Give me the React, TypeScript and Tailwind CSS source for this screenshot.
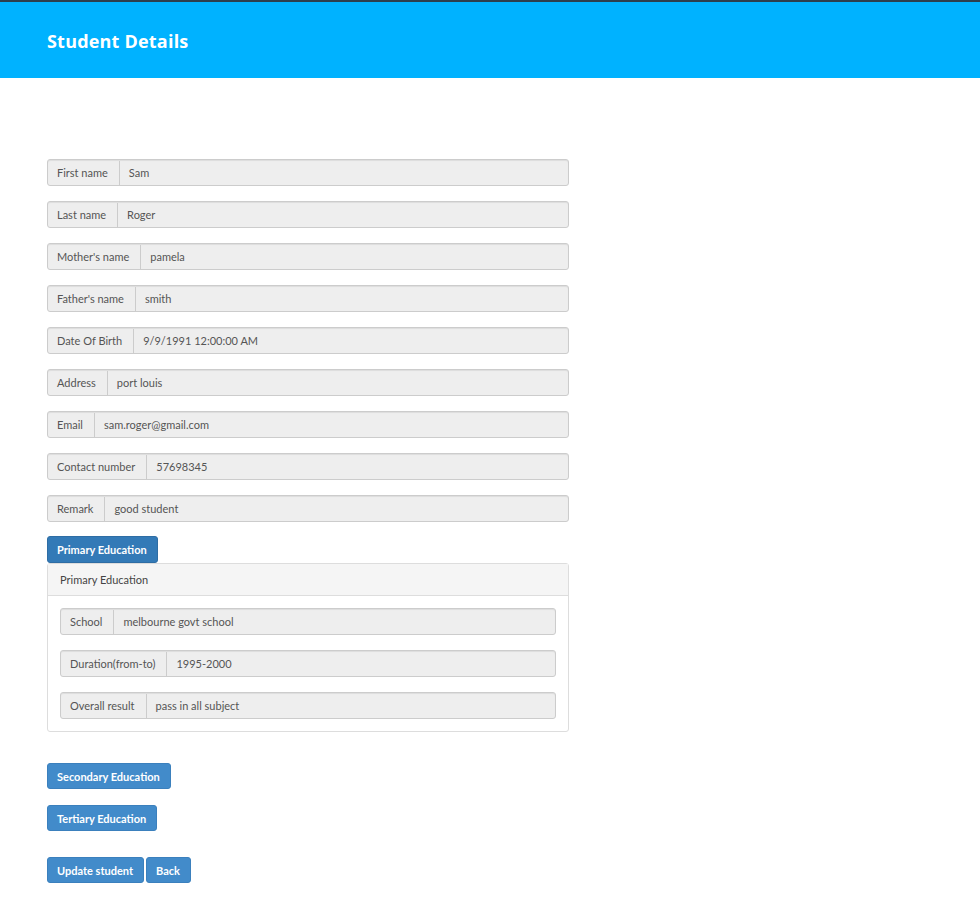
import React from "react";

const fields: [string, string][] = [
  ["First name", "Sam"],
  ["Last name", "Roger"],
  ["Mother's name", "pamela"],
  ["Father's name", "smith"],
  ["Date Of Birth", "9/9/1991 12:00:00 AM"],
  ["Address", "port louis"],
  ["Email", "sam.roger@gmail.com"],
  ["Contact number", "57698345"],
  ["Remark", "good student"],
];

const primary: [string, string][] = [
  ["School", "melbourne govt school"],
  ["Duration(from-to)", "1995-2000"],
  ["Overall result", "pass in all subject"],
];

function Field({ label, value }: { label: string; value: string }) {
  return (
    <div className="flex h-[27px] w-full rounded-[3px] border border-[#cccccc] bg-[#eeeeee] pt-px text-[11px] text-[#555555] shadow-[inset_0_1px_1px_rgba(0,0,0,0.075)]">
      <span className="flex items-center whitespace-nowrap border-r border-[#cccccc] pl-[9px] pr-[11px]">
        {label}
      </span>
      <span className="flex flex-1 items-center px-[9px]">{value}</span>
    </div>
  );
}

function Btn({ children, dark }: { children: React.ReactNode; dark?: boolean }) {
  return (
    <button
      type="button"
      className={
        dark
          ? "h-[27px] rounded-[3px] border border-[#2e6da4] bg-[#337ab7] pl-[9px] pr-[10px] pt-px text-[11px] font-bold text-white"
          : "h-[26px] rounded-[3px] border border-[#3b80bd] bg-[#428bca] pl-[9px] pr-[10px] pt-px text-[11px] font-bold text-white"
      }
    >
      {children}
    </button>
  );
}

export default function App() {
  return (
    <div className="min-h-[904px] bg-white font-['Lato','Liberation_Sans',sans-serif]">
      <header className="h-[78px] border-t-2 border-[#2d3e4e] bg-[#00b2ff]">
        <h1 className="pl-[47px] pt-[28px] font-['Open_Sans','Liberation_Sans',sans-serif] text-[18px] font-bold leading-[22px] tracking-[0.2px] text-white">
          Student Details
        </h1>
      </header>

      <main className="ml-[47px] w-[522px] pt-[81px]">
        <div className="flex flex-col gap-[15px]">
          {fields.map(([l, v]) => (
            <Field key={l} label={l} value={v} />
          ))}
        </div>

        <div className="mt-[14px]">
          <Btn dark>Primary Education</Btn>
          <div className="rounded-[3px] border border-[#dddddd] bg-white">
            <div className="flex h-[32px] items-center border-b border-[#dddddd] bg-[#f5f5f5] px-[12px] pt-px text-[11px] text-[#444444]">
              Primary Education
            </div>
            <div className="flex flex-col gap-[15px] p-[12px]">
              {primary.map(([l, v]) => (
                <Field key={l} label={l} value={v} />
              ))}
            </div>
          </div>
        </div>

        <div className="mt-[31px] flex flex-col items-start gap-[16px]">
          <Btn>Secondary Education</Btn>
          <Btn>Tertiary Education</Btn>
        </div>

        <div className="mt-[26px] flex gap-[2px]">
          <Btn>Update student</Btn>
          <Btn>Back</Btn>
        </div>
      </main>
    </div>
  );
}
